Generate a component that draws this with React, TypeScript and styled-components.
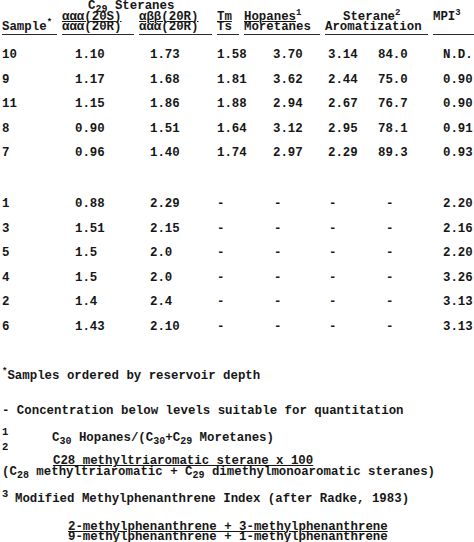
import React from 'react';
import styled, { createGlobalStyle } from 'styled-components';

const GlobalStyle = createGlobalStyle`
  html, body {
    margin: 0;
    padding: 0;
    background: #ffffff;
  }
  body {
    font-family: "Liberation Mono", "Courier New", monospace;
    font-weight: 700;
    font-size: 12.4px;
    color: #161616;
  }
`;

const Page = styled.div`
  width: 474px;
  height: 542px;
  overflow: hidden;
  padding: 1px 0 0 2px;
  box-sizing: border-box;
  white-space: pre;
`;

const Head = styled.div`
  display: grid;
  grid-template-columns: 60px 77px 78px 27px 81px 108px 1fr;
  grid-template-rows: 10.5px auto;
  line-height: 10.5px;
`;

const Title = styled.div`
  grid-column: 2 / 4;
  grid-row: 1;
  padding-left: 26px;
`;

const HeadCol = styled.div<{ $last?: boolean }>`
  grid-row: 2;
  display: flex;
  flex-direction: column;
  justify-content: flex-end;
  margin-right: ${p => (p.$last ? '0' : '5px')};
  padding-bottom: 1px;
  border-bottom: 1.5px solid #2a2a2a;
`;

const HeadLine = styled.div<{ $indent?: number }>`
  height: 10.5px;
  padding-left: ${p => p.$indent || 0}px;
`;

const Over = styled.span`
  text-decoration: underline;
  text-decoration-thickness: 1px;
  text-underline-offset: 1px;
`;

const Sup = styled.sup`
  font-size: 9px;
  line-height: 0;
  vertical-align: 5px;
`;

const Sub = styled.sub`
  font-size: 10px;
  line-height: 0;
  vertical-align: -3px;
`;

const Group = styled.div<{ $gap: number }>`
  margin-top: ${p => p.$gap}px;
`;

const Row = styled.div`
  display: grid;
  grid-template-columns: 73px 75px 67px 56px 55px 50px 65px 1fr;
  height: 24.5px;
  line-height: 24.5px;
`;

const Cell = styled.div<{ $shift?: number }>`
  padding-left: ${p => p.$shift || 0}px;
`;

const Notes = styled.div`
  margin-top: 30.75px;
`;

const Note = styled.div<{ $gap?: number; $lh?: number; $indent?: number }>`
  display: flex;
  align-items: flex-start;
  margin-top: ${p => p.$gap || 0}px;
  line-height: ${p => p.$lh || 13}px;
  height: ${p => p.$lh || 13}px;
  padding-left: ${p => p.$indent || 0}px;
`;

const NoteText = styled.span``;

const Marker = styled.span<{ $width: number; $raise: number }>`
  display: block;
  flex: none;
  width: ${p => p.$width}px;
  font-size: 10.5px;
  margin-top: -${p => p.$raise}px;
`;

type DataRow = string[];

const upper: DataRow[] = [
  ['10', '1.10', '1.73', '1.58', '3.70', '3.14', '84.0', 'N.D.'],
  ['9', '1.17', '1.68', '1.81', '3.62', '2.44', '75.0', '0.90'],
  ['11', '1.15', '1.86', '1.88', '2.94', '2.67', '76.7', '0.90'],
  ['8', '0.90', '1.51', '1.64', '3.12', '2.95', '78.1', '0.91'],
  ['7', '0.96', '1.40', '1.74', '2.97', '2.29', '89.3', '0.93'],
];

const lower: DataRow[] = [
  ['1', '0.88', '2.29', '-', '-', '-', '-', '2.20'],
  ['3', '1.51', '2.15', '-', '-', '-', '-', '2.16'],
  ['5', '1.5', '2.0', '-', '-', '-', '-', '2.20'],
  ['4', '1.5', '2.0', '-', '-', '-', '-', '3.26'],
  ['2', '1.4', '2.4', '-', '-', '-', '-', '3.13'],
  ['6', '1.43', '2.10', '-', '-', '-', '-', '3.13'],
];

// dashes sit a little off the value column in the scan
const dashShift = [0, 0, 0, 0, 1, 1, 8, 0];

const Rows = ({ data }: { data: DataRow[] }) => (
  <>
    {data.map(r => (
      <Row key={r[0]}>
        {r.map((v, i) => (
          <Cell key={i} $shift={v === '-' ? dashShift[i] : 0}>
            {v}
          </Cell>
        ))}
      </Row>
    ))}
  </>
);

export default function App() {
  return (
    <Page>
      <GlobalStyle />
      <Head>
        <Title>
          C<Sub>29</Sub> Steranes
        </Title>
        <HeadCol>
          <HeadLine>
            Sample<Sup>*</Sup>
          </HeadLine>
        </HeadCol>
        <HeadCol>
          <HeadLine>
            <Over>ααα(20S)</Over>
          </HeadLine>
          <HeadLine>ααα(20R)</HeadLine>
        </HeadCol>
        <HeadCol>
          <HeadLine>
            <Over>αββ(20R)</Over>
          </HeadLine>
          <HeadLine>ααα(20R)</HeadLine>
        </HeadCol>
        <HeadCol>
          <HeadLine>
            <Over>Tm</Over>
          </HeadLine>
          <HeadLine>Ts</HeadLine>
        </HeadCol>
        <HeadCol>
          <HeadLine>
            <Over>Hopanes</Over>
            <Sup>1</Sup>
          </HeadLine>
          <HeadLine>Moretanes</HeadLine>
        </HeadCol>
        <HeadCol>
          <HeadLine $indent={18}>
            Sterane<Sup>2</Sup>
          </HeadLine>
          <HeadLine>Aromatization</HeadLine>
        </HeadCol>
        <HeadCol $last>
          <HeadLine>
            MPI<Sup>3</Sup>
          </HeadLine>
          <HeadLine> </HeadLine>
        </HeadCol>
      </Head>

      <Group $gap={8.75}>
        <Rows data={upper} />
      </Group>
      <Group $gap={26.5}>
        <Rows data={lower} />
      </Group>

      <Notes>
        <Note>
          <NoteText>
            <Sup>*</Sup>Samples ordered by reservoir depth
          </NoteText>
        </Note>
        <Note $gap={22}>
          <NoteText>- Concentration below levels suitable for quantitation</NoteText>
        </Note>
        <Note $gap={14}>
          <Marker $width={50} $raise={6}>1</Marker>
          <NoteText>
            C<Sub>30</Sub> Hopanes/(C<Sub>30</Sub>+C<Sub>29</Sub> Moretanes)
          </NoteText>
        </Note>
        <Note $gap={11} $lh={11}>
          <Marker $width={51} $raise={14}>2</Marker>
          <NoteText>
            <Over>C28 methyltriaromatic sterane x 100</Over>
          </NoteText>
        </Note>
        <Note $lh={11}>
          <NoteText>
            (C<Sub>28</Sub> methyltriaromatic + C<Sub>29</Sub> dimethylmonoaromatic steranes)
          </NoteText>
        </Note>
        <Note $gap={15}>
          <Marker $width={13} $raise={5}>3</Marker>
          <NoteText>Modified Methylphenanthrene Index (after Radke, 1983)</NoteText>
        </Note>
        <Note $gap={15.75} $lh={10.5} $indent={66}>
          <NoteText>
            <Over>2-methylphenanthrene + 3-methylphenanthrene</Over>
          </NoteText>
        </Note>
        <Note $lh={10.5} $indent={66}>
          <NoteText>9-methylphenanthrene + 1-methylphenanthrene</NoteText>
        </Note>
      </Notes>
    </Page>
  );
}
